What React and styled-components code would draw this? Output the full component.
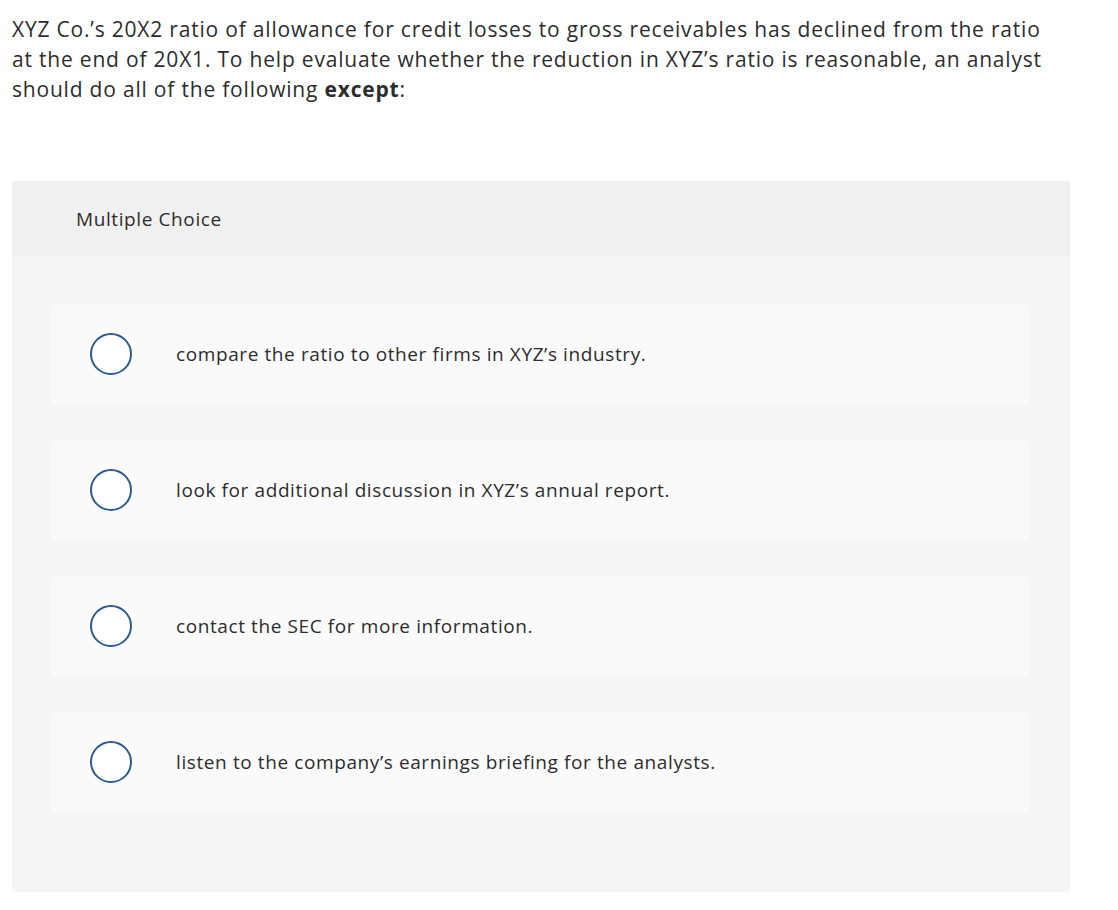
import React from 'react'
import styled, { createGlobalStyle } from 'styled-components'

const Global = createGlobalStyle`
  body {
    margin: 0;
    background: #fff;
    font-family: "Open Sans", "Noto Sans", sans-serif;
    color: #2d2d2d;
  }
`

const Page = styled.div`
  padding: 14px 48px 0 12px;
`

const Question = styled.p`
  margin: 0;
  font-size: 21px;
  letter-spacing: 0.8px;
  line-height: 30px;
  white-space: nowrap;
  b { font-weight: 700; }
`

const Panel = styled.div`
  margin-top: 77px;
  width: 1058px;
  background: #f5f5f5;
  border-radius: 4px;
  overflow: hidden;
  padding-bottom: 80px;
`

const PanelHead = styled.div`
  height: 75px;
  background: #f0f0f0;
  display: flex;
  align-items: center;
  padding-left: 64px;
  font-size: 19px;
  letter-spacing: 0.6px;
`

const List = styled.div`
  display: flex;
  flex-direction: column;
  gap: 36px;
  padding: 48px 0 0 39px;
`

const Option = styled.label`
  width: 978px;
  height: 100px;
  box-sizing: border-box;
  background: #fafafa;
  border-radius: 5px;
  display: flex;
  align-items: center;
  padding-left: 39px;
  gap: 44px;
  font-size: 19px;
  letter-spacing: 0.6px;
  cursor: pointer;
`

const Radio = styled.span`
  width: 42px;
  height: 42px;
  box-sizing: border-box;
  border: 2px solid #2f5a92;
  border-radius: 50%;
  background: #fff;
  flex-shrink: 0;
`

const choices = [
  'compare the ratio to other firms in XYZ\u2019s industry.',
  'look for additional discussion in XYZ\u2019s annual report.',
  'contact the SEC for more information.',
  'listen to the company\u2019s earnings briefing for the analysts.',
]

export default function App() {
  return (
    <Page>
      <Global />
      <Question>
        XYZ Co.’s 20X2 ratio of allowance for credit losses to gross receivables has declined from the ratio
        <br />
        at the end of 20X1. To help evaluate whether the reduction in XYZ’s ratio is reasonable, an analyst
        <br />
        should do all of the following <b>except</b>:
      </Question>
      <Panel>
        <PanelHead>Multiple Choice</PanelHead>
        <List>
          {choices.map((c) => (
            <Option key={c}>
              <Radio />
              {c}
            </Option>
          ))}
        </List>
      </Panel>
    </Page>
  )
}
